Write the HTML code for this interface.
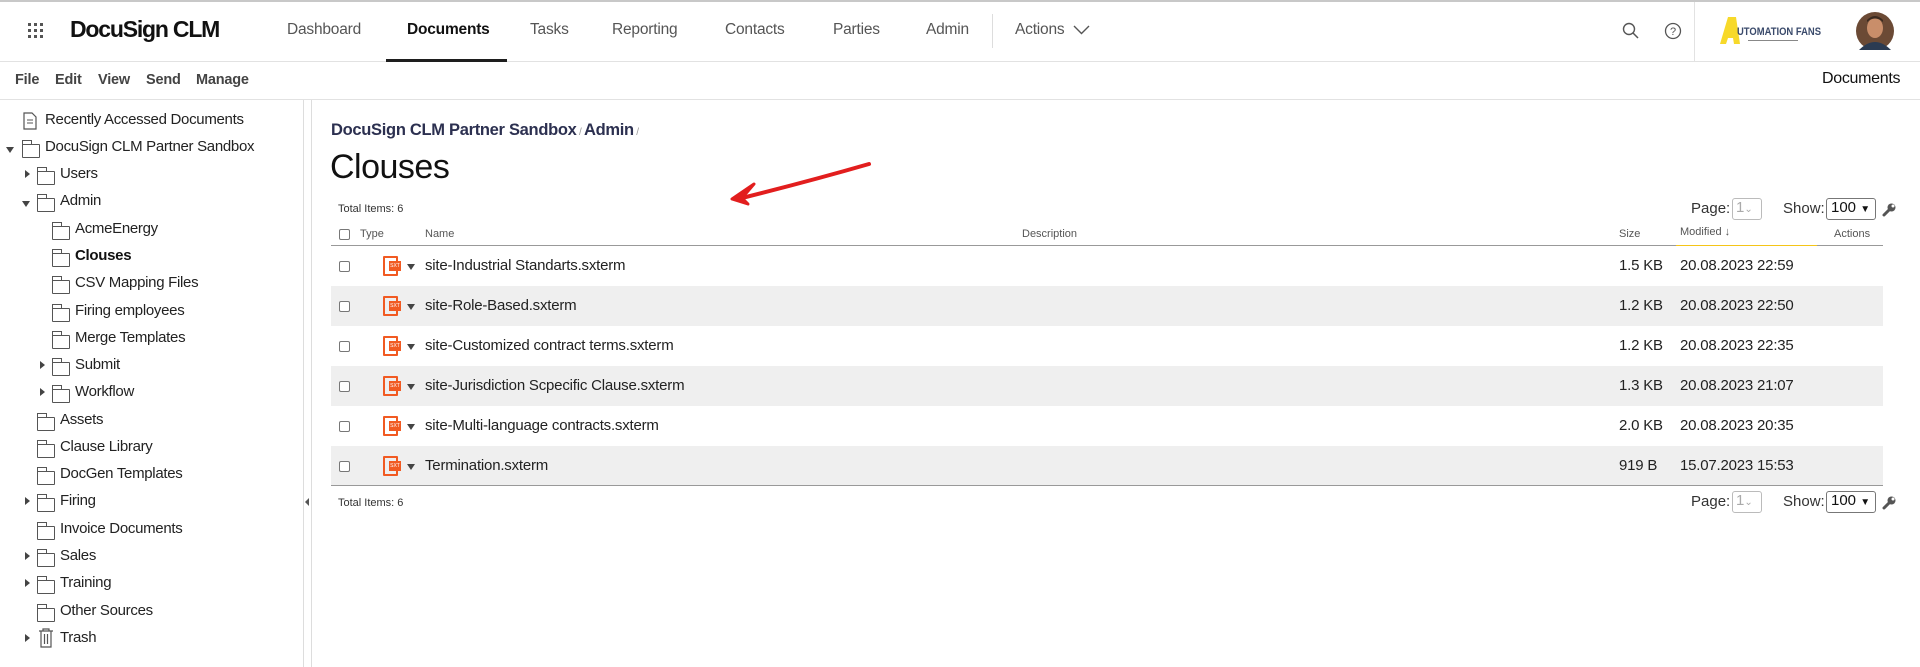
<!DOCTYPE html>
<html><head><meta charset="utf-8"><style>
*{margin:0;padding:0;box-sizing:border-box}
body{width:1920px;height:667px;position:relative;background:#fff;font-family:"Liberation Sans",sans-serif;color:#1e1e1e;overflow:hidden}
.a{position:absolute;white-space:nowrap}
.nav{top:21px;font-size:15.5px;color:#555;letter-spacing:-0.2px}
.mb{top:72px;font-size:14.5px;font-weight:bold;color:#444;letter-spacing:-0.2px}
.tr{font-size:15px;color:#222;letter-spacing:-0.3px}
.fold{position:absolute;width:18px;height:14px;border:1.3px solid #555;border-radius:1px}
.fold:before{content:"";position:absolute;left:-1.3px;top:-5px;width:8px;height:4px;border:1.3px solid #555;border-bottom:none}
.car{position:absolute;width:0;height:0;border-top:4px solid transparent;border-bottom:4px solid transparent;border-left:5px solid #444}
.cd{position:absolute;width:0;height:0;border-left:4.5px solid transparent;border-right:4.5px solid transparent;border-top:6px solid #444}
.row{position:absolute;left:331px;width:1552px;height:40px}
.row.g{background:#efefef}
.cb{position:absolute;width:11px;height:11px;border:1px solid #777;border-radius:2px;background:#fff}
.fi{position:absolute;width:15px;height:20px;border:2px solid #f15a22;border-radius:1px}
.fi b{position:absolute;left:4px;top:3px;width:12px;height:10px;background:#f15a22;color:#fff;font-size:5px;line-height:10px;text-align:center;font-weight:normal}
.rt{font-size:15px;color:#222;letter-spacing:-0.2px}
.hd{top:228px;font-size:11px;color:#555}
.sel{position:absolute;border:1px solid #bbb;border-radius:3px;height:22px}
</style></head><body>
<div class="a" style="left:0;top:0;width:1920px;height:2px;background:#c8c8c8"></div>
<div class="a" style="left:0;top:61px;width:1920px;height:1px;background:#e2e2e2"></div>
<div class="a" style="left:0;top:99px;width:1920px;height:1px;background:#e2e2e2"></div>
<!-- grid -->
<svg class="a" style="left:28px;top:23px" width="16" height="16"><g fill="#555"><rect x="0" y="0" width="3" height="3"/><rect x="6" y="0" width="3" height="3"/><rect x="12" y="0" width="3" height="3"/><rect x="0" y="6" width="3" height="3"/><rect x="6" y="6" width="3" height="3"/><rect x="12" y="6" width="3" height="3"/><rect x="0" y="12" width="3" height="3"/><rect x="6" y="12" width="3" height="3"/><rect x="12" y="12" width="3" height="3"/></g></svg>
<div class="a" style="left:70px;top:16px;font-size:23px;font-weight:bold;color:#111;letter-spacing:-1.2px">DocuSign CLM</div>
<div class="a nav" style="left:287px">Dashboard</div>
<div class="a nav" style="left:407px;color:#111;font-weight:bold">Documents</div>
<div class="a" style="left:386px;top:59px;width:121px;height:3px;background:#1e1e1e"></div>
<div class="a nav" style="left:530px">Tasks</div>
<div class="a nav" style="left:612px">Reporting</div>
<div class="a nav" style="left:725px">Contacts</div>
<div class="a nav" style="left:833px">Parties</div>
<div class="a nav" style="left:926px">Admin</div>
<div class="a" style="left:992px;top:14px;width:1px;height:34px;background:#ddd"></div>
<div class="a nav" style="left:1015px">Actions</div>
<svg class="a" style="left:1073px;top:25px" width="17" height="10"><path d="M1 1 L8.5 8.5 L16 1" stroke="#555" stroke-width="1.4" fill="none"/></svg>
<svg class="a" style="left:1622px;top:22px" width="18" height="18"><circle cx="7" cy="7" r="5.5" stroke="#555" stroke-width="1.4" fill="none"/><path d="M11 11 L16 16" stroke="#555" stroke-width="1.5"/></svg>
<svg class="a" style="left:1664px;top:22px" width="18" height="18"><circle cx="9" cy="9" r="7.5" stroke="#555" stroke-width="1.3" fill="none"/><text x="9" y="13" font-size="11" text-anchor="middle" fill="#555" font-family="Liberation Sans">?</text></svg>
<div class="a" style="left:1694px;top:2px;width:1px;height:59px;background:#e2e2e2"></div>
<svg class="a" style="left:1718px;top:16px" width="120" height="30"><path d="M2 28 L10 1 L18 1 L22 28 L16 28 L15 22 L10 22 L8 28Z" fill="#f7d92a"/><text x="19" y="19" font-size="11" font-weight="bold" fill="#3a4a6b" font-family="Liberation Sans" textLength="84" lengthAdjust="spacingAndGlyphs">UTOMATION FANS</text><rect x="30" y="24" width="50" height="1" fill="#888"/></svg>
<svg class="a" style="left:1856px;top:12px" width="38" height="38"><circle cx="19" cy="19" r="19" fill="#6b4a35"/><ellipse cx="19" cy="16" rx="8" ry="10" fill="#c98e6a"/><path d="M3 38 Q19 22 35 38Z" fill="#2b3b52"/><path d="M11 10 Q19 3 27 10 L27 8 Q19 0 11 8Z" fill="#3a2a20"/></svg>
<!-- menubar -->
<div class="a mb" style="left:15px">File</div>
<div class="a mb" style="left:55px">Edit</div>
<div class="a mb" style="left:98px">View</div>
<div class="a mb" style="left:146px">Send</div>
<div class="a mb" style="left:196px">Manage</div>
<div class="a" style="left:1822px;top:70px;font-size:16px;color:#111;letter-spacing:-0.3px">Documents</div>
<!-- sidebar -->
<div class="a" style="left:303px;top:100px;width:1px;height:567px;background:#ddd"></div>
<div class="a" style="left:311px;top:100px;width:1px;height:567px;background:#ddd"></div>
<div class="a" style="left:305px;top:498px;width:0;height:0;border-top:4px solid transparent;border-bottom:4px solid transparent;border-right:4px solid #555"></div>

<svg class="a" style="left:23px;top:112px" width="14" height="18"><path d="M1 1 H9 L13 5 V17 H1Z" stroke="#555" stroke-width="1.2" fill="none"/><path d="M4 8 H10 M4 11 H10" stroke="#555" stroke-width="1"/></svg>
<div class="a tr" style="left:45px;top:111px">Recently Accessed Documents</div>

<div class="cd" style="left:6px;top:147px"></div><div class="fold" style="left:22px;top:144px"></div>
<div class="a tr" style="left:45px;top:138px">DocuSign CLM Partner Sandbox</div>

<div class="car" style="left:25px;top:170px"></div><div class="fold" style="left:37px;top:171px"></div>
<div class="a tr" style="left:60px;top:165px">Users</div>
<div class="cd" style="left:22px;top:201px"></div><div class="fold" style="left:37px;top:198px"></div>
<div class="a tr" style="left:60px;top:192px">Admin</div>

<div class="fold" style="left:52px;top:226px"></div><div class="a tr" style="left:75px;top:220px">AcmeEnergy</div>
<div class="fold" style="left:52px;top:253px"></div><div class="a tr" style="left:75px;top:247px;font-weight:bold;color:#111">Clouses</div>
<div class="fold" style="left:52px;top:280px"></div><div class="a tr" style="left:75px;top:274px">CSV Mapping Files</div>
<div class="fold" style="left:52px;top:308px"></div><div class="a tr" style="left:75px;top:302px">Firing employees</div>
<div class="fold" style="left:52px;top:335px"></div><div class="a tr" style="left:75px;top:329px">Merge Templates</div>
<div class="car" style="left:40px;top:361px"></div><div class="fold" style="left:52px;top:362px"></div><div class="a tr" style="left:75px;top:356px">Submit</div>
<div class="car" style="left:40px;top:388px"></div><div class="fold" style="left:52px;top:389px"></div><div class="a tr" style="left:75px;top:383px">Workflow</div>

<div class="fold" style="left:37px;top:417px"></div><div class="a tr" style="left:60px;top:411px">Assets</div>
<div class="fold" style="left:37px;top:444px"></div><div class="a tr" style="left:60px;top:438px">Clause Library</div>
<div class="fold" style="left:37px;top:471px"></div><div class="a tr" style="left:60px;top:465px">DocGen Templates</div>
<div class="car" style="left:25px;top:497px"></div><div class="fold" style="left:37px;top:498px"></div><div class="a tr" style="left:60px;top:492px">Firing</div>
<div class="fold" style="left:37px;top:526px"></div><div class="a tr" style="left:60px;top:520px">Invoice Documents</div>
<div class="car" style="left:25px;top:552px"></div><div class="fold" style="left:37px;top:553px"></div><div class="a tr" style="left:60px;top:547px">Sales</div>
<div class="car" style="left:25px;top:579px"></div><div class="fold" style="left:37px;top:580px"></div><div class="a tr" style="left:60px;top:574px">Training</div>
<div class="fold" style="left:37px;top:608px"></div><div class="a tr" style="left:60px;top:602px">Other Sources</div>
<div class="car" style="left:25px;top:634px"></div>
<svg class="a" style="left:38px;top:628px" width="16" height="20"><path d="M1 3 H15 M5 3 V1 H11 V3 M3 3 V19 H13 V3 M6.5 6 V16 M9.5 6 V16" stroke="#555" stroke-width="1.2" fill="none"/></svg>
<div class="a tr" style="left:60px;top:629px">Trash</div>

<!-- main -->
<div class="a" style="left:331px;top:121px;font-size:16.5px;font-weight:bold;color:#2c3050;letter-spacing:-0.3px">DocuSign CLM Partner Sandbox<span style="font-size:10px;color:#999;font-weight:normal"> / </span>Admin<span style="font-size:10px;color:#999;font-weight:normal"> /</span></div>
<div class="a" style="left:330px;top:148px;font-size:34px;color:#111;letter-spacing:-0.5px">Clouses</div>
<svg class="a" style="left:720px;top:155px" width="160" height="60"><path d="M149 9 Q90 26 22 43" stroke="#e21e1e" stroke-width="4" fill="none" stroke-linecap="round"/><path d="M34 29 L12 44 L28 49 L22 43Z" fill="#e21e1e" stroke="#e21e1e" stroke-width="3" stroke-linejoin="round"/></svg>
<div class="a" style="left:338px;top:203px;font-size:11px;color:#333">Total Items: 6</div>
<div class="a" style="left:1691px;top:200px;font-size:15px;color:#333">Page:</div>
<div class="sel" style="left:1732px;top:198px;width:30px;color:#aaa;font-size:15px;padding-left:3px">1<span style="font-size:10px">&#8964;</span></div>
<div class="a" style="left:1783px;top:200px;font-size:15px;color:#333">Show:</div>
<div class="sel" style="left:1826px;top:198px;width:50px;border-color:#777;font-size:15px;padding-left:4px;color:#111">100 <span style="font-size:10px">&#9660;</span></div>
<svg class="a" style="left:1881px;top:202px" width="16" height="16"><path d="M3 13 L9 7" stroke="#555" stroke-width="3" stroke-linecap="round"/><circle cx="10.5" cy="5.5" r="4" fill="#555"/><circle cx="12" cy="4" r="1.5" fill="#fff"/></svg>

<div class="cb" style="left:339px;top:229px"></div>
<div class="a hd" style="left:360px">Type</div>
<div class="a hd" style="left:425px">Name</div>
<div class="a hd" style="left:1022px">Description</div>
<div class="a hd" style="left:1619px">Size</div>
<div class="a hd" style="left:1680px;top:226px">Modified &#8595;</div>
<div class="a hd" style="left:1834px">Actions</div>
<div class="a" style="left:331px;top:245px;width:1552px;height:1px;background:#999"></div>
<div class="a" style="left:1676px;top:245px;width:141px;height:1px;background:#f5c518"></div>

<div class="row" style="top:246px"></div>
<div class="row g" style="top:286px"></div>
<div class="row" style="top:326px"></div>
<div class="row g" style="top:366px"></div>
<div class="row" style="top:406px"></div>
<div class="row g" style="top:446px"></div>
<div class="a" style="left:331px;top:485px;width:1552px;height:1px;background:#999"></div>

<div class="cb" style="left:339px;top:261px"></div><div class="fi" style="left:383px;top:256px"><b>SXT</b></div><div class="cd" style="left:407px;top:264px"></div><div class="a rt" style="left:425px;top:257px">site-Industrial Standarts.sxterm</div><div class="a rt" style="left:1619px;top:257px">1.5 KB</div><div class="a rt" style="left:1680px;top:257px">20.08.2023 22:59</div>
<div class="cb" style="left:339px;top:301px"></div><div class="fi" style="left:383px;top:296px"><b>SXT</b></div><div class="cd" style="left:407px;top:304px"></div><div class="a rt" style="left:425px;top:297px">site-Role-Based.sxterm</div><div class="a rt" style="left:1619px;top:297px">1.2 KB</div><div class="a rt" style="left:1680px;top:297px">20.08.2023 22:50</div>
<div class="cb" style="left:339px;top:341px"></div><div class="fi" style="left:383px;top:336px"><b>SXT</b></div><div class="cd" style="left:407px;top:344px"></div><div class="a rt" style="left:425px;top:337px">site-Customized contract terms.sxterm</div><div class="a rt" style="left:1619px;top:337px">1.2 KB</div><div class="a rt" style="left:1680px;top:337px">20.08.2023 22:35</div>
<div class="cb" style="left:339px;top:381px"></div><div class="fi" style="left:383px;top:376px"><b>SXT</b></div><div class="cd" style="left:407px;top:384px"></div><div class="a rt" style="left:425px;top:377px">site-Jurisdiction Scpecific Clause.sxterm</div><div class="a rt" style="left:1619px;top:377px">1.3 KB</div><div class="a rt" style="left:1680px;top:377px">20.08.2023 21:07</div>
<div class="cb" style="left:339px;top:421px"></div><div class="fi" style="left:383px;top:416px"><b>SXT</b></div><div class="cd" style="left:407px;top:424px"></div><div class="a rt" style="left:425px;top:417px">site-Multi-language contracts.sxterm</div><div class="a rt" style="left:1619px;top:417px">2.0 KB</div><div class="a rt" style="left:1680px;top:417px">20.08.2023 20:35</div>
<div class="cb" style="left:339px;top:461px"></div><div class="fi" style="left:383px;top:456px"><b>SXT</b></div><div class="cd" style="left:407px;top:464px"></div><div class="a rt" style="left:425px;top:457px">Termination.sxterm</div><div class="a rt" style="left:1619px;top:457px">919 B</div><div class="a rt" style="left:1680px;top:457px">15.07.2023 15:53</div>

<div class="a" style="left:338px;top:497px;font-size:11px;color:#333">Total Items: 6</div>
<div class="a" style="left:1691px;top:493px;font-size:15px;color:#333">Page:</div>
<div class="sel" style="left:1732px;top:491px;width:30px;color:#aaa;font-size:15px;padding-left:3px">1<span style="font-size:10px">&#8964;</span></div>
<div class="a" style="left:1783px;top:493px;font-size:15px;color:#333">Show:</div>
<div class="sel" style="left:1826px;top:491px;width:50px;border-color:#777;font-size:15px;padding-left:4px;color:#111">100 <span style="font-size:10px">&#9660;</span></div>
<svg class="a" style="left:1881px;top:495px" width="16" height="16"><path d="M3 13 L9 7" stroke="#555" stroke-width="3" stroke-linecap="round"/><circle cx="10.5" cy="5.5" r="4" fill="#555"/><circle cx="12" cy="4" r="1.5" fill="#fff"/></svg>
</body></html>
